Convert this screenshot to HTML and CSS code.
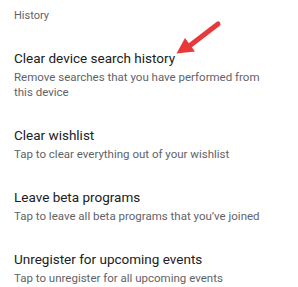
FILE: index.html
```html
<!DOCTYPE html>
<html lang="en">
<head>
    <meta charset="UTF-8">
    <meta name="viewport" content="width=device-width, initial-scale=1.0">
    <title>History</title>
    <link rel="stylesheet" href="styles.css">
</head>
<body>
    <div class="page">
        <div class="section-title">History</div>
        <div class="item">
            <div class="item-title">Clear device search history</div>
            <div class="item-sub">Remove searches that you have performed from this device</div>
        </div>
        <div class="item">
            <div class="item-title">Clear wishlist</div>
            <div class="item-sub">Tap to clear everything out of your wishlist</div>
        </div>
        <div class="item">
            <div class="item-title">Leave beta programs</div>
            <div class="item-sub">Tap to leave all beta programs that you&rsquo;ve joined</div>
        </div>
        <div class="item">
            <div class="item-title">Unregister for upcoming events</div>
            <div class="item-sub">Tap to unregister for all upcoming events</div>
        </div>

        <!-- red pointer arrow -->
        <svg class="arrow" width="60" height="45" viewBox="0 0 60 45">
            <line x1="46" y1="4" x2="16" y2="27" stroke="#e8383b" stroke-width="5" stroke-linecap="round"/>
            <polygon points="4.5,33.5 13,18 23,31.5" fill="#e8383b"/>
        </svg>
    </div>
</body>
</html>
```

FILE: styles.css
```css
body {
    margin: 0;
    background-color: #ffffff;
    font-family: Roboto, "Noto Sans", Arial, sans-serif;
}

.page {
    position: relative;
    padding: 8px 24px 0 14px;
}

.section-title {
    font-size: 11px;
    line-height: 16px;
    color: #5f6368;
    margin-bottom: 23px;
}

.item {
    padding-bottom: 24px;
}

.item:last-of-type {
    padding-bottom: 0;
}

.item-title {
    font-size: 13.5px;
    line-height: 22px;
    color: #202124;
}

.item-sub {
    margin-top: 1px;
    font-size: 11.5px;
    line-height: 15px;
    color: #5f6368;
}

.arrow {
    position: absolute;
    left: 172px;
    top: 20px;
}
```
